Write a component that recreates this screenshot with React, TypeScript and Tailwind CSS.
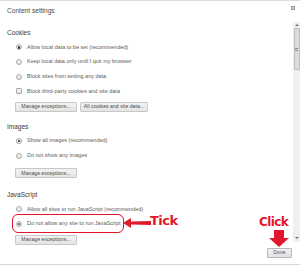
import React from "react";

const font = { fontFamily: '"Liberation Sans", Arial, sans-serif' };

function Radio({ checked, label }: { checked?: boolean; label: string }) {
  return (
    <div className="flex h-[14.7px] items-center pl-[16px]">
      <span className="flex h-[6px] w-[6px] items-center justify-center rounded-full border border-[#aaaaaa] bg-gradient-to-b from-[#f4f4f4] to-[#e2e2e2]">
        {checked && <span className="h-[2.5px] w-[2.5px] rounded-full bg-[#333]" />}
      </span>
      <span className="ml-[5px] text-[5.5px] leading-none text-[#5c5c5c]">{label}</span>
    </div>
  );
}

function Check({ label }: { label: string }) {
  return (
    <div className="flex h-[14.7px] items-center pl-[16px]">
      <span className="h-[6px] w-[6px] rounded-[1px] border border-[#aaaaaa] bg-gradient-to-b from-[#f6f6f6] to-[#e2e2e2]" />
      <span className="ml-[5px] text-[5.5px] leading-none text-[#5c5c5c]">{label}</span>
    </div>
  );
}

function Btn({ label, w }: { label: string; w: string }) {
  return (
    <div
      className={`flex h-[10px] items-center justify-center rounded-[1px] border border-[#c8c8c8] bg-gradient-to-b from-[#f3f3f3] to-[#e4e4e4] text-[5.2px] leading-none text-[#4a4a4a] ${w}`}
    >
      {label}
    </div>
  );
}

function Heading({ children, mt }: { children: React.ReactNode; mt: string }) {
  return (
    <div className={`flex h-[14px] items-center pl-[7px] text-[6.5px] leading-none text-[#3a3a3a] ${mt}`}>
      {children}
    </div>
  );
}

export default function App() {
  return (
    <div className="relative h-[268px] w-[300px] overflow-hidden bg-white" style={font}>
      <div className="h-px w-full bg-[#dedede]" />
      {/* header */}
      <div className="flex h-[21px] items-center justify-between pl-[7px] pr-[5px]">
        <span className="text-[6.6px] leading-none text-[#4a4a4a]">Content settings</span>
        <span className="-mt-[8px] flex h-[4px] w-[4px] items-center justify-center bg-[#9a9a9a]">
          <span className="h-[2px] w-[2px] bg-[#d8d8d8]" />
        </span>
      </div>
      {/* body */}
      <div className="flex h-[220px]">
        <div className="flex-1 pt-[4px]">
          <Heading mt="">Cookies</Heading>
          <Radio checked label="Allow local data to be set (recommended)" />
          <Radio label="Keep local data only until I quit my browser" />
          <Radio label="Block sites from setting any data" />
          <Check label="Block third-party cookies and site data" />
          <div className="mt-[3px] flex gap-[3px] pl-[15px]">
            <Btn label="Manage exceptions..." w="w-[62px]" />
            <Btn label="All cookies and site data..." w="w-[68px]" />
          </div>
          <Heading mt="mt-[8px]">Images</Heading>
          <Radio checked label="Show all images (recommended)" />
          <Radio label="Do not show any images" />
          <div className="mt-[5px] flex pl-[15px]">
            <Btn label="Manage exceptions..." w="w-[62px]" />
          </div>
          <Heading mt="mt-[10px]">JavaScript</Heading>
          <Radio label="Allow all sites to run JavaScript (recommended)" />
          <Radio checked label="Do not allow any site to run JavaScript" />
          <div className="mt-[3px] flex pl-[15px]">
            <Btn label="Manage exceptions..." w="w-[62px]" />
          </div>
        </div>
        {/* scrollbar */}
        <div className="flex w-[7px] flex-col items-center bg-[#efefef]">
          <div className="flex h-[6px] items-center">
            <span className="h-0 w-0 border-x-[2px] border-b-[2px] border-x-transparent border-b-[#777]" />
          </div>
          <div className="flex h-[42px] w-[6px] items-center justify-center rounded-[1px] border border-[#bdbdbd] bg-[#dcdcdc]">
            <span className="h-[3px] w-[3px] border-y border-[#888]" />
          </div>
          <div className="flex-1" />
          <div className="flex h-[8px] items-center">
            <span className="h-0 w-0 border-x-[2px] border-t-[2px] border-x-transparent border-t-[#777]" />
          </div>
        </div>
      </div>
      {/* footer */}
      <div className="flex h-[22px] items-center justify-end pr-[8px]">
        <div className="flex h-[10px] w-[25px] items-center justify-center rounded-[1px] border border-[#b9b9b9] bg-gradient-to-b from-[#f2f2f2] to-[#e0e0e0] text-[5.2px] leading-none text-[#555]">
          Done
        </div>
      </div>
      <div className="h-px w-full bg-[#d6d6d6]" />

      {/* annotations */}
      <div className="absolute left-[12px] top-[214px] h-[19px] w-[112px] rounded-[6px] border-[1.5px] border-[#e3172b]" />
      <svg className="absolute left-[123px] top-[217px]" width="28" height="12" viewBox="0 0 28 12">
        <polygon points="0,6 8,1 8,4.5 28,4 28,8 8,7.5 8,11" fill="#e3172b" />
      </svg>
      <div
        className="absolute left-[150px] top-[214px] text-[13px] font-bold leading-none text-[#e3172b]"
        style={{ fontFamily: '"DejaVu Sans", sans-serif', letterSpacing: "-0.5px" }}
      >
        Tick
      </div>
      <div
        className="absolute left-[259px] top-[216px] text-[12px] font-bold leading-none text-[#e3172b]"
        style={{ fontFamily: '"DejaVu Sans", sans-serif', letterSpacing: "-0.6px" }}
      >
        Click
      </div>
      <svg className="absolute left-[269px] top-[230px]" width="20" height="17" viewBox="0 0 20 17">
        <polygon points="5,0 15,0 15,8 20,8 10,17 0,8 5,8" fill="#e3172b" />
      </svg>
    </div>
  );
}
